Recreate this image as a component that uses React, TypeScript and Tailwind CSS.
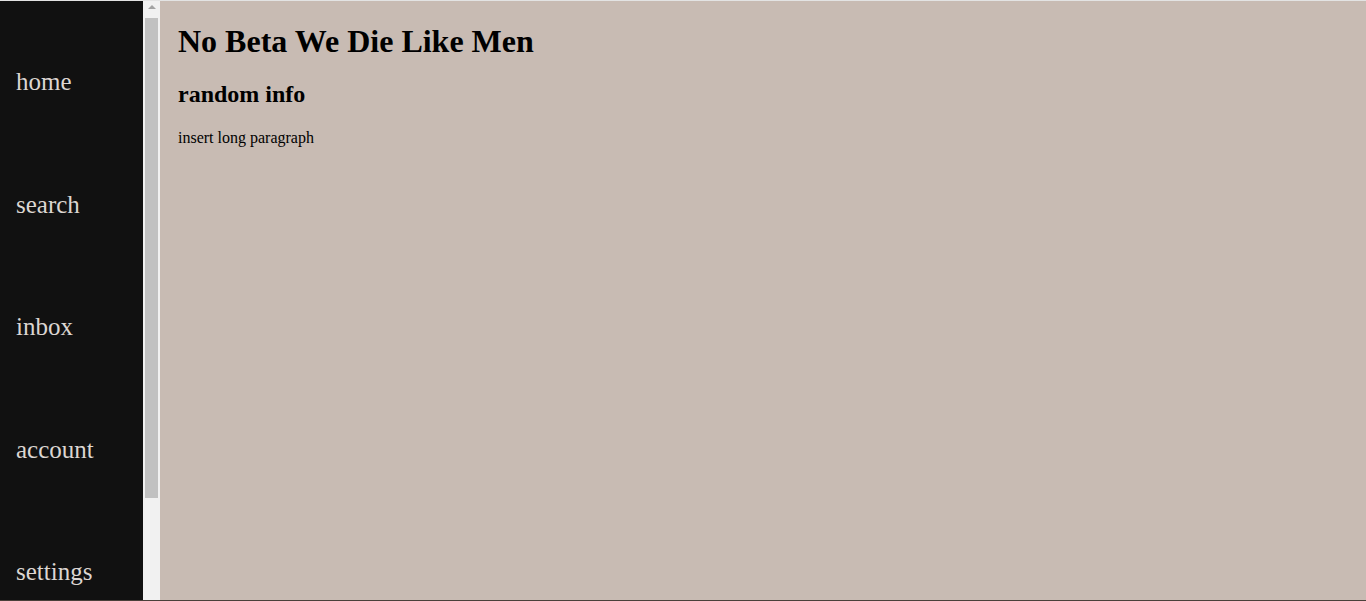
import React from "react";

const items = ["home", "search", "inbox", "account", "settings"];

export default function App() {
  return (
    <div
      className="w-[1366px] h-[601px] flex flex-col overflow-hidden"
      style={{ fontFamily: '"Liberation Serif", "Times New Roman", serif' }}
    >
      <div className="h-px bg-[#e3e3e3] shrink-0" />
      <div className="flex flex-1 min-h-0">
        <nav className="w-[143px] bg-[#111111] pt-[20px] overflow-hidden shrink-0">
          {items.map((t) => (
            <div key={t} className="h-[122.5px] flex items-center pl-[16px] shrink-0">
              <span className="text-[25px] leading-[28px] text-[#dcd6d2]">{t}</span>
            </div>
          ))}
        </nav>
        <div className="w-[17px] bg-[#f1f1f1] shrink-0 flex flex-col items-center">
          <div className="h-[17px] flex items-center justify-center">
            <svg width="8" height="5" viewBox="0 0 8 5" className="mt-[-5px]">
              <polygon points="4,0 8,4 0,4" fill="#a3a3a3" />
            </svg>
          </div>
          <div className="w-[13px] h-[480px] bg-[#c1c1c1]" />
        </div>
        <main className="flex-1 bg-[#c8bbb3] pt-[22px] pl-[18px] text-black">
          <h1 className="text-[32px] font-bold leading-[36px]">No Beta We Die Like Men</h1>
          <h2 className="text-[24px] font-bold leading-[28px] mt-[21px]">random info</h2>
          <p className="text-[16px] leading-[18px] mt-[21px]">insert long paragraph</p>
        </main>
      </div>
      <div className="h-px bg-[#4a403a] shrink-0" />
    </div>
  );
}
